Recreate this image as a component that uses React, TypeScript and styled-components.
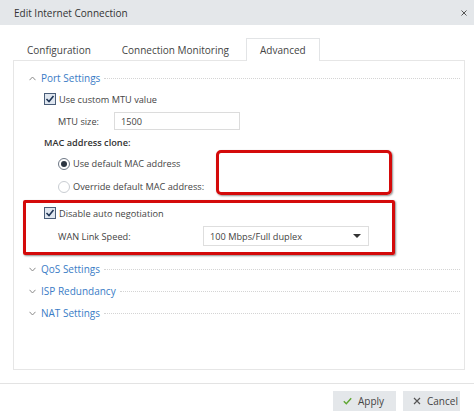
import React from "react";
import styled, { createGlobalStyle } from "styled-components";

const Global = createGlobalStyle`
  html, body { margin: 0; padding: 0; background: #fff; }
  body { font-family: "Open Sans", "Noto Sans", sans-serif; font-size: 10px; color: #3c3c3c; }
  * { box-sizing: border-box; }
`;

const Window = styled.div`
  width: 474px;
  height: 417px;
  display: flex;
  flex-direction: column;
  background: #fff;
  overflow: hidden;
`;

const TitleBar = styled.div`
  height: 25px;
  flex: none;
  background: #e4e7ea;
  display: flex;
  align-items: center;
  justify-content: space-between;
  padding: 0 7px 0 14px;
  font-size: 10px;
  color: #333;
`;

const CloseIcon = styled.svg`
  width: 6px;
  height: 6px;
`;

const Main = styled.div`
  flex: 1;
  display: flex;
  flex-direction: column;
  padding: 13px 9px 0 13px;
`;

const TabRow = styled.div`
  display: flex;
  gap: 3px;
  height: 23px;
  position: relative;
  z-index: 1;
`;

const Tab = styled.div<{ $active?: boolean }>`
  height: ${(p) => (p.$active ? "23px" : "22px")};
  padding: 0 13px;
  display: flex;
  align-items: center;
  font-size: 10px;
  color: #444;
  background: #fff;
  border: 1px solid ${(p) => (p.$active ? "#e2e4e6" : "transparent")};
  border-bottom: none;
`;

const Panel = styled.div`
  margin-top: -1px;
  height: 310px;
  border: 1px solid #e6e6e6;
  display: flex;
  flex-direction: column;
  padding: 6px 4px 0 14px;
`;

const SectionHead = styled.div`
  height: 22px;
  display: flex;
  align-items: center;
  color: #3a7cc6;
  font-size: 10px;
`;

const Chevron = styled.svg`
  width: 7px;
  height: 5px;
  margin: 0 5px 0 1px;
  flex: none;
`;

const Dots = styled.div`
  flex: 1;
  margin-left: 4px;
  border-top: 1px dotted #d4d4d4;
`;

const Section = styled.div`
  display: flex;
  flex-direction: column;
  padding-left: 16px;
  font-size: 9.2px;
`;

const Row = styled.div<{ $h?: number; $indent?: number }>`
  height: ${(p) => p.$h ?? 20}px;
  display: flex;
  align-items: center;
  padding-left: ${(p) => p.$indent ?? 0}px;
`;

const Label = styled.span<{ $w?: number; $bold?: boolean }>`
  width: ${(p) => (p.$w ? `${p.$w}px` : "auto")};
  flex: none;
  font-weight: ${(p) => (p.$bold ? 600 : 400)};
  color: ${(p) => (p.$bold ? "#333" : "#444")};
  white-space: nowrap;
`;

const CheckBox = styled.span`
  width: 12px;
  height: 12px;
  border: 1px solid #4a5d78;
  background: #dfe6ef;
  display: inline-flex;
  align-items: center;
  justify-content: center;
  margin-right: 3px;
  flex: none;
`;

const Radio = styled.span<{ $on?: boolean }>`
  width: 12px;
  height: 12px;
  border-radius: 50%;
  border: 1px solid ${(p) => (p.$on ? "#6d7785" : "#c9cdd2")};
  background: #fff;
  display: inline-flex;
  align-items: center;
  justify-content: center;
  margin-right: 3px;
  flex: none;
  &::after {
    content: "";
    width: 6px;
    height: 6px;
    border-radius: 50%;
    background: ${(p) => (p.$on ? "#2d3642" : "transparent")};
  }
`;

const TextInput = styled.div`
  width: 126px;
  height: 18px;
  border: 1px solid #dcdcdc;
  display: flex;
  align-items: center;
  padding-left: 6px;
  color: #444;
`;

const Select = styled.div`
  width: 166px;
  height: 20px;
  border: 1px solid #dedede;
  display: flex;
  align-items: center;
  justify-content: space-between;
  padding: 0 7px 0 6px;
  color: #444;
`;

const Caret = styled.span`
  width: 0;
  height: 0;
  border-left: 4px solid transparent;
  border-right: 4px solid transparent;
  border-top: 4px solid #333;
`;

const MacGroup = styled.div`
  position: relative;
  display: flex;
  flex-direction: column;
`;

const Callout = styled.div`
  position: absolute;
  left: 172px;
  top: -2px;
  width: 176px;
  height: 45px;
  border: 3px solid #d40a0a;
  border-radius: 5px;
  box-shadow: 1px 1px 2px rgba(0, 0, 0, 0.45);
`;

const Highlight = styled.div`
  margin: 2px 0 0 -21px;
  width: 372px;
  height: 55px;
  border: 3px solid #d40a0a;
  border-radius: 2px;
  box-shadow: 1px 1px 2px rgba(0, 0, 0, 0.45);
  display: flex;
  flex-direction: column;
  padding: 0 0 0 18px;
`;

const Collapsed = styled.div`
  margin-top: 3px;
  display: flex;
  flex-direction: column;
`;

const Footer = styled.div`
  flex: none;
  height: 35px;
  margin: 13px -9px 0 -13px;
  border-top: 1px solid #e3e3e3;
  display: flex;
  justify-content: flex-end;
  align-items: flex-start;
  gap: 7px;
  padding: 7px 14px 0 0;
`;

const Button = styled.div<{ $w: number }>`
  width: ${(p) => p.$w}px;
  height: 20px;
  background: #e4e7ea;
  display: flex;
  align-items: center;
  gap: 6px;
  padding-left: 10px;
  font-size: 10px;
  color: #444;
`;

const Up = () => (
  <Chevron viewBox="0 0 7 5">
    <polyline points="0.5,4.2 3.5,1 6.5,4.2" fill="none" stroke="#8a8a8a" strokeWidth="1" />
  </Chevron>
);

const Down = () => (
  <Chevron viewBox="0 0 7 5">
    <polyline points="0.5,0.8 3.5,4 6.5,0.8" fill="none" stroke="#8a8a8a" strokeWidth="1" />
  </Chevron>
);

const Check = () => (
  <CheckBox>
    <svg width="10" height="10" viewBox="0 0 10 10">
      <polyline points="1.5,5 4,7.5 8.5,2" fill="none" stroke="#1e3556" strokeWidth="1.6" />
    </svg>
  </CheckBox>
);

const Head = ({ open, children }: { open?: boolean; children: string }) => (
  <SectionHead>
    {open ? <Up /> : <Down />}
    {children}
    <Dots />
  </SectionHead>
);

export default function App() {
  return (
    <Window>
      <Global />
      <TitleBar>
        Edit Internet Connection
        <CloseIcon viewBox="0 0 6 6">
          <path d="M0.5 0.5 L5.5 5.5 M5.5 0.5 L0.5 5.5" stroke="#555" strokeWidth="1" />
        </CloseIcon>
      </TitleBar>
      <Main>
        <TabRow>
          <Tab>Configuration</Tab>
          <Tab>Connection Monitoring</Tab>
          <Tab $active>Advanced</Tab>
        </TabRow>
        <Panel>
          <Head open>Port Settings</Head>
          <Section>
            <Row $h={20}>
              <Check />
              <Label>Use custom MTU value</Label>
            </Row>
            <Row $h={24} $indent={14}>
              <Label $w={56}>MTU size:</Label>
              <TextInput>1500</TextInput>
            </Row>
            <Row $h={19}>
              <Label $bold>MAC address clone:</Label>
            </Row>
            <MacGroup>
              <Row $h={23} $indent={14}>
                <Radio $on />
                <Label>Use default MAC address</Label>
              </Row>
              <Row $h={23} $indent={14}>
                <Radio />
                <Label>Override default MAC address:</Label>
              </Row>
              <Callout />
            </MacGroup>
            <Highlight>
              <Row $h={20}>
                <Check />
                <Label>Disable auto negotiation</Label>
              </Row>
              <Row $h={26} $indent={14}>
                <Label $w={145}>WAN Link Speed:</Label>
                <Select>
                  100 Mbps/Full duplex
                  <Caret />
                </Select>
              </Row>
            </Highlight>
          </Section>
          <Collapsed>
            <Head>QoS Settings</Head>
            <Head>ISP Redundancy</Head>
            <Head>NAT Settings</Head>
          </Collapsed>
        </Panel>
        <Footer>
          <Button $w={63}>
            <svg width="9" height="8" viewBox="0 0 9 8">
              <polyline points="0.8,4.3 3.3,6.8 8.2,1.2" fill="none" stroke="#5fa631" strokeWidth="1.4" />
            </svg>
            Apply
          </Button>
          <Button $w={57}>
            <svg width="8" height="8" viewBox="0 0 8 8">
              <path d="M1 1 L7 7 M7 1 L1 7" stroke="#555" strokeWidth="1.2" />
            </svg>
            Cancel
          </Button>
        </Footer>
      </Main>
    </Window>
  );
}
